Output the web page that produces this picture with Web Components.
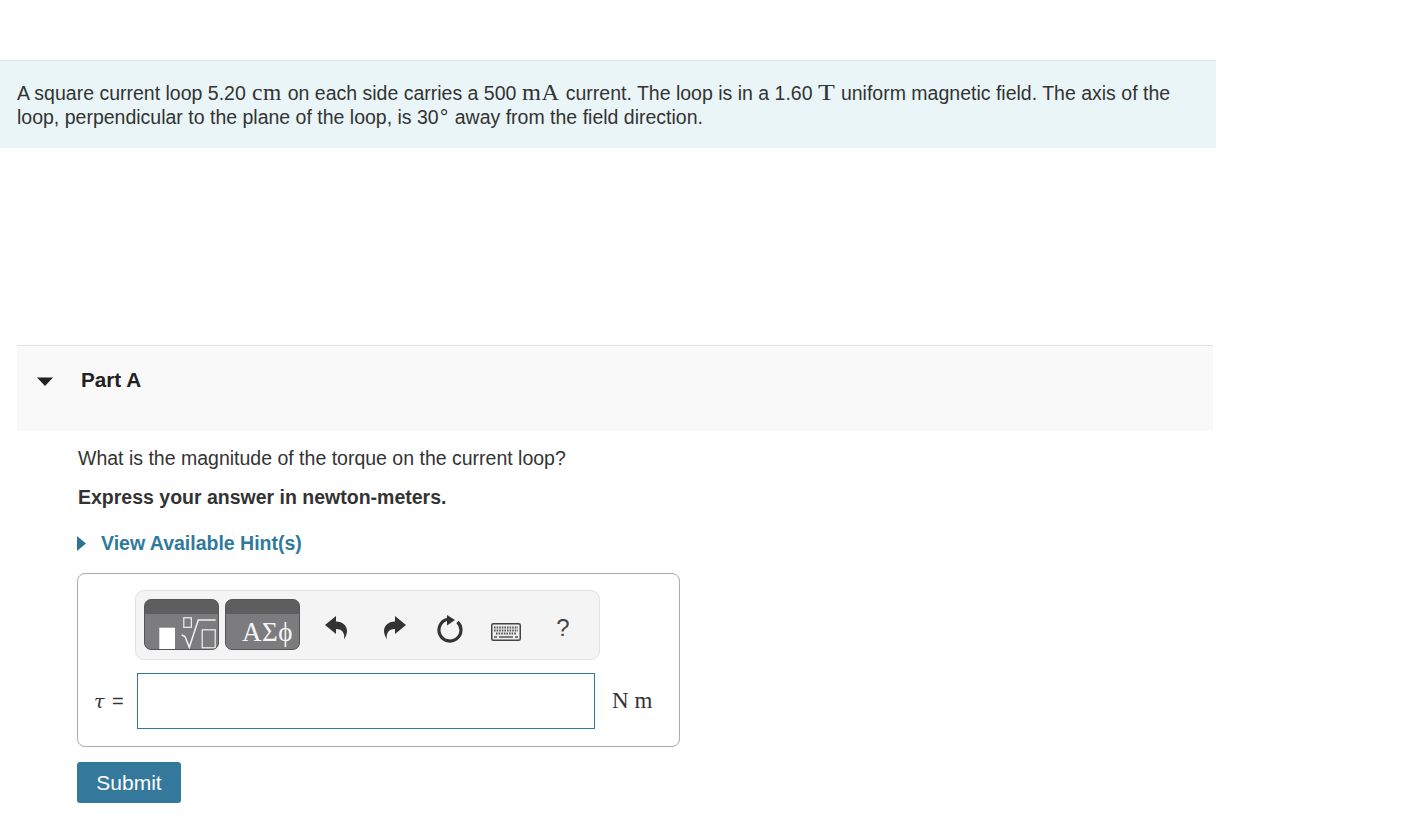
<!DOCTYPE html>
<html lang="en">
<head>
<meta charset="utf-8">
<title>Part A</title>
<style>
  html, body { margin: 0; background: #fff; }
  body { font: 19.5px/24px "Liberation Sans", Arial, sans-serif; color: #333; }
</style>
</head>
<body>
<problem-page>
  <problem-statement>
    A square current loop 5.20 <unit-text style="--sx:1.02;--ml:1px;--mr:1px">cm</unit-text> on each side carries a 500 <unit-text style="--sx:1.06;--ml:0px;--mr:3px">mA</unit-text> current. The loop is in a 1.60 <unit-text style="--sx:1.2;--ml:0px;--mr:3px">T</unit-text> uniform magnetic field. The axis of the<br>loop, perpendicular to the plane of the loop, is 30<sup>&deg;</sup> away from the field direction.
  </problem-statement>
  <part-section label="Part A">
    <p>What is the magnitude of the torque on the current loop?</p>
    <p><b>Express your answer in newton-meters.</b></p>
    <hint-toggle>View Available Hint(s)</hint-toggle>
    <answer-box symbol="&#964;" units="N m"></answer-box>
    <submit-button>Submit</submit-button>
  </part-section>
</problem-page>

<script>
// small helper, every element just stamps its html into an open shadow root
const define = (tag, html, setup) => {
  customElements.define(tag, class extends HTMLElement {
    connectedCallback() {
      if (this.shadowRoot) return;
      const root = this.attachShadow({ mode: 'open' });
      root.innerHTML = typeof html === 'function' ? html(this) : html;
      if (setup) setup(root, this);
    }
  });
};

define('problem-page', `
  <style>
    :host { display: block; width: 1216px; padding-top: 60px; }
  </style>
  <slot></slot>
`);

define('problem-statement', `
  <style>
    :host {
      display: block;
      box-sizing: border-box;
      height: 88px;
      padding: 20px 17px 0;
      background: #e9f5f7;
      border-top: 1px solid #dfe3e4;
      font-size: 19.5px;
      line-height: 24px;
      color: #333;
    }
    ::slotted(sup) { font-size: 21.5px; line-height: 0; vertical-align: -1px; margin: 0 1px 0 1px; }
  </style>
  <slot></slot>
`);

// math units are Computer Modern in the original, so stretch the serif a bit
define('unit-text', `
  <style>
    :host {
      display: inline-block;
      margin: 0 var(--mr, 0) 0 var(--ml, 0);
      transform: scaleX(var(--sx, 1));
      transform-origin: left;
      font-family: "Liberation Serif", "DejaVu Serif", serif;
      font-size: 23px;
      letter-spacing: .5px;
    }
  </style>
  <slot></slot>
`);

define('part-section', (el) => `
  <style>
    :host { display: block; margin: 197px 3px 0 17px; }
    header {
      box-sizing: border-box;
      height: 86px;
      display: flex;
      align-items: flex-start;
      padding: 21px 0 0 20px;
      background: #f9f9f9;
      border-top: 1px solid #e2e2e2;
      font-weight: bold;
      font-size: 20.7px;
      line-height: 26px;
      color: #222;
    }
    svg { width: 16px; height: 9px; margin: 10px 28px 0 0; flex: none; }
    .body { padding: 15px 0 0 60px; }
    ::slotted(p) { margin: 0 0 15px 1px; }
  </style>
  <header>
    <svg viewBox="0 0 16 9"><path d="M0 .5h16L8 9z" fill="#222"/></svg>
    <span>${el.getAttribute('label')}</span>
  </header>
  <div class="body"><slot></slot></div>
`);

define('hint-toggle', `
  <style>
    :host {
      display: flex;
      align-items: center;
      height: 24px;
      margin-top: 22px;
      font-weight: bold;
      color: #2f7a9c;
    }
    svg { width: 9px; height: 15px; margin-right: 15px; flex: none; }
  </style>
  <svg viewBox="0 0 9 15"><path d="M0 0l9 7.500-9 7.500z" fill="#2f7396"/></svg>
  <span><slot></slot></span>
`);

define('edit-toolbar', `
  <style>
    :host {
      display: flex;
      align-items: center;
      box-sizing: border-box;
      width: 465px;
      height: 70px;
      padding: 0 0 0 8px;
      background: #f4f4f4;
      border: 1px solid #e2e2e2;
      border-radius: 9px;
    }
    .tpl {
      box-sizing: border-box;
      width: 75px;
      height: 51px;
      margin: -1px 6px 0 0;
      border-radius: 7px;
      border: 1px solid #555;
      background: linear-gradient(#5e5e5e 0 14px, #7c7c7e 14px);
      overflow: hidden;
      color: #fff;
    }
    .tpl svg { display: block; width: 73px; height: 49px; }
    .greek {
      display: flex;
      justify-content: center;
      padding: 17px 0 0 10px;
      font: 27px/30px "Liberation Serif", serif;
      letter-spacing: .5px;
      color: #f6f6f6;
    }
    .tool {
      position: absolute;
      top: 50%;
      transform: translate(-50%, -50%);
      color: #333;
    }
    .tools { position: relative; flex: 1; height: 100%; }
    .help { font: 24px/28px "Liberation Sans", sans-serif; color: #444; }
  </style>
  <div class="tpl">
    <svg viewBox="0 0 73 49">
      <rect x="14.300" y="27.700" width="15.700" height="21.300" fill="#fff"/>
      <rect x="38.800" y="17.800" width="7.500" height="9.500" fill="none" stroke="#f2f2f2" stroke-width="1.200"/>
      <path d="M36.700 35L40 36.500 44.300 47.300 53.300 20H70.700" fill="none" stroke="#f2f2f2" stroke-width="1.500"/>
      <rect x="57.200" y="29.800" width="13" height="18" fill="none" stroke="#f2f2f2" stroke-width="1.200"/>
    </svg>
  </div>
  <div class="tpl"><div class="greek">&#913;&#931;&#981;</div></div>
  <div class="tools">
    <svg class="tool" style="left:30px;margin-top:3px" width="22" height="24" viewBox="0 0 22 24">
      <path d="M0 9L11 0v5.500C18 5.500 22 10 22 15c0 3-1.500 6-3 8.500 1-5.500-1-10.500-8-10.500v5z" fill="#333"/>
    </svg>
    <svg class="tool" style="left:89px;margin-top:3px" width="22" height="24" viewBox="0 0 22 24">
      <path d="M22 9L11 0v5.500C4 5.500 0 10 0 15c0 3 1.500 6 3 8.500-1-5.500 1-10.500 8-10.500v5z" fill="#333"/>
    </svg>
    <svg class="tool" style="left:144px;margin-top:4px" width="26" height="28" viewBox="0 0 26 28">
      <path d="M10.500 4.300A11 11 0 1 0 20.500 7" fill="none" stroke="#333" stroke-width="3.200"/>
      <path d="M10 0l8 5-8 5.500z" fill="#333"/>
    </svg>
    <svg class="tool" style="left:200px;margin-top:7px" width="30" height="18" viewBox="0 0 30 18">
      <rect x=".75" y=".75" width="28.500" height="16.500" rx="1.500" fill="#eee" stroke="#444" stroke-width="1.500"/>
      <path d="M3 4.500h24M3 7.500h24M5 10.500h20" stroke="#555" stroke-width="2" stroke-dasharray="1.600 1"/>
      <path d="M3 14h3M8 14h14M24 14h3" stroke="#555" stroke-width="1.500"/>
    </svg>
    <span class="tool help" style="left:257px;margin-top:3px">?</span>
  </div>
`);

define('answer-box', (el) => `
  <style>
    :host {
      display: grid;
      grid-template-columns: 59px 458px auto;
      grid-template-rows: 70px 56px;
      row-gap: 13px;
      box-sizing: border-box;
      width: 603px;
      height: 174px;
      margin-top: 18px;
      padding-top: 16px;
      border: 1px solid #aaa;
      border-radius: 8px;
      background: #fff;
    }
    edit-toolbar { grid-column: 2 / 4; margin-left: -2px; }
    .sym {
      display: flex;
      align-items: center;
      padding-left: 16px;
      font: 20px/20px "Liberation Sans", sans-serif;
      color: #333;
    }
    .sym i { width: 18px; font-family: "DejaVu Serif", serif; font-size: 19px; }
    .input {
      box-sizing: border-box;
      border: 1px solid #2f7a9c;
      background: #fff;
    }
    .units {
      align-self: center;
      padding-left: 17px;
      font: 23px/24px "Liberation Serif", serif;
      letter-spacing: 1.600px;
      word-spacing: -3px;
      color: #333;
    }
  </style>
  <edit-toolbar></edit-toolbar>
  <div class="sym"><i>${el.getAttribute('symbol')}</i><span>=</span></div>
  <div class="input"></div>
  <div class="units">${el.getAttribute('units')}</div>
`);

define('submit-button', `
  <style>
    :host {
      display: block;
      box-sizing: border-box;
      width: 104px;
      height: 41px;
      margin-top: 15px;
      background: #34789b;
      border-radius: 3px;
      color: #fff;
      font-size: 21px;
      line-height: 41px;
      text-align: center;
    }
  </style>
  <slot></slot>
`);
</script>
</body>
</html>
